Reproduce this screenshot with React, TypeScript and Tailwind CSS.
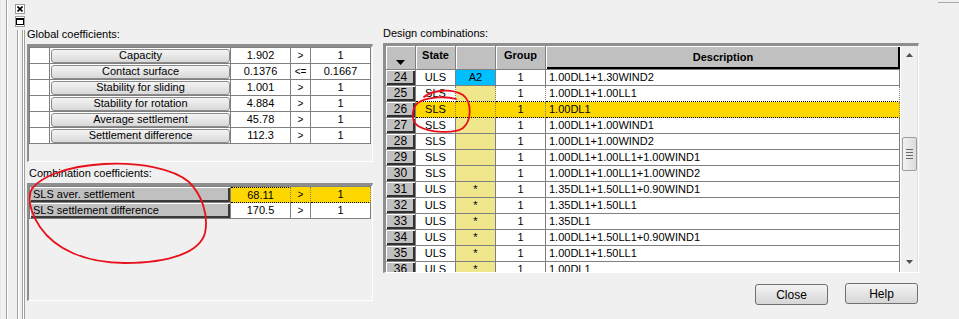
import React from "react";

type Coef = { label: string; value: string; op: string; limit: string };

const globalCoefs: Coef[] = [
  { label: "Capacity", value: "1.902", op: ">", limit: "1" },
  { label: "Contact surface", value: "0.1376", op: "<=", limit: "0.1667" },
  { label: "Stability for sliding", value: "1.001", op: ">", limit: "1" },
  { label: "Stability for rotation", value: "4.884", op: ">", limit: "1" },
  { label: "Average settlement", value: "45.78", op: ">", limit: "1" },
  { label: "Settlement difference", value: "112.3", op: ">", limit: "1" },
];

const comboCoefs: Coef[] = [
  { label: "SLS aver. settlement", value: "68.11", op: ">", limit: "1" },
  { label: "SLS settlement difference", value: "170.5", op: ">", limit: "1" },
];

type Combo = { n: number; state: string; flag: string; desc: string };

const combos: Combo[] = [
  { n: 24, state: "ULS", flag: "A2", desc: "1.00DL1+1.30WIND2" },
  { n: 25, state: "SLS", flag: "", desc: "1.00DL1+1.00LL1" },
  { n: 26, state: "SLS", flag: "", desc: "1.00DL1" },
  { n: 27, state: "SLS", flag: "", desc: "1.00DL1+1.00WIND1" },
  { n: 28, state: "SLS", flag: "", desc: "1.00DL1+1.00WIND2" },
  { n: 29, state: "SLS", flag: "", desc: "1.00DL1+1.00LL1+1.00WIND1" },
  { n: 30, state: "SLS", flag: "", desc: "1.00DL1+1.00LL1+1.00WIND2" },
  { n: 31, state: "ULS", flag: "*", desc: "1.35DL1+1.50LL1+0.90WIND1" },
  { n: 32, state: "ULS", flag: "*", desc: "1.35DL1+1.50LL1" },
  { n: 33, state: "ULS", flag: "*", desc: "1.35DL1" },
  { n: 34, state: "ULS", flag: "*", desc: "1.00DL1+1.50LL1+0.90WIND1" },
  { n: 35, state: "ULS", flag: "*", desc: "1.00DL1+1.50LL1" },
  { n: 36, state: "ULS", flag: "*", desc: "1.00DL1" },
];

const SELECTED = 26;

function LeftStrip() {
  return (
    <div className="flex h-full w-[27px] shrink-0">
      <div className="w-[6px] border-l border-l-[#e6e6e6]" />
      <div className="w-[2px] border-l border-r border-l-[#a0a0a0] border-r-white" />
      <div className="flex w-[19px] flex-col">
        <div className="ml-[7px] mt-[4px] flex h-[10px] w-[10px] items-center justify-center border border-[#9a9a9a] bg-white">
          <svg width="6" height="6" viewBox="0 0 6 6">
            <path d="M0.5 0.5 L5.5 5.5 M5.5 0.5 L0.5 5.5" stroke="#000" strokeWidth="1.6" />
          </svg>
        </div>
        <div className="ml-[7px] mt-[2px] flex h-[11px] w-[10px] items-center justify-center border border-[#9a9a9a] bg-white">
          <svg width="8" height="7" viewBox="0 0 8 7">
            <rect x="0.5" y="1" width="7" height="5.5" fill="none" stroke="#000" strokeWidth="1" />
            <rect x="0" y="0" width="8" height="2" fill="#000" />
          </svg>
        </div>
        <div className="mt-[3px] flex flex-1">
          <div className="ml-[9px] w-[2px] border-l border-r border-l-[#a0a0a0] border-r-white" />
          <div className="ml-[3px] w-[3px] border-l border-r border-[#a0a0a0] bg-white" />
        </div>
      </div>
    </div>
  );
}

function CoefPanel({ rows, combo }: { rows: Coef[]; combo?: boolean }) {
  return (
    <div className="h-[118px] border-l-2 border-t-[3px] border-r border-b border-l-[#8e8e8e] border-t-[#8e8e8e] border-r-white border-b-white">
      <div className="w-[342px] border-l border-t border-[#808080]">
        {rows.map((r, i) => {
          const hot = combo && i === 0;
          const valCls = hot
            ? "bg-[#ffd700] border-b border-dotted border-b-black"
            : "bg-white border-b border-b-[#808080]";
          return (
            <div key={r.label} className="flex h-[16px]">
              {combo ? (
                <div className="w-[201px] border-b border-r border-[#808080] bg-[#c0c0c0] pl-[3px] leading-[15px] shadow-[inset_1px_1px_0_#fff,inset_-2px_-2px_0_#3a3a3a]">
                  {r.label}
                </div>
              ) : (
                <>
                  <div className="w-[20px] border-b border-r border-[#808080] bg-white" />
                  <div className="flex w-[181px] items-center border-b border-r border-[#808080] bg-white pl-[1px]">
                    <div className="flex h-[14px] w-full items-center justify-center rounded-[3px] border border-[#8c8c8c] bg-linear-to-b from-[#f5f5f5] to-[#d8d8d8] leading-none">
                      {r.label}
                    </div>
                  </div>
                </>
              )}
              <div className={`w-[60px] border-r border-r-[#808080] text-center leading-[15px] ${valCls} ${hot ? "border-t border-t-black border-dotted" : ""}`}>
                {r.value}
              </div>
              <div className={`w-[20px] border-r border-r-[#808080] text-center text-[10px] leading-[15px] ${valCls}`}>
                {r.op}
              </div>
              <div className={`w-[60px] border-r border-r-[#808080] text-center leading-[15px] ${valCls}`}>
                {r.limit}
              </div>
            </div>
          );
        })}
      </div>
    </div>
  );
}

function Triangle({ up }: { up?: boolean }) {
  return (
    <svg width="7" height="4" viewBox="0 0 7 4">
      <polygon points={up ? "0,4 7,4 3.5,0" : "0,0 7,0 3.5,4"} fill="#505050" />
    </svg>
  );
}

function Scrollbar() {
  return (
    <div className="flex w-[18px] flex-col bg-[#f0f0f0] shadow-[inset_1px_0_0_#fff,inset_-1px_0_0_#e0e0e0]">
      <div className="flex h-[17px] items-center justify-center">
        <Triangle up />
      </div>
      <div className="flex-1">
        <div className="mx-auto mt-[74px] flex h-[34px] w-[15px] flex-col items-center justify-center gap-[2px] rounded-[2px] border border-[#9e9e9e] bg-linear-to-r from-[#f2f2f2] to-[#dcdcdc]">
          <div className="h-px w-[7px] bg-[#6a6a6a]" />
          <div className="h-px w-[7px] bg-[#6a6a6a]" />
          <div className="h-px w-[7px] bg-[#6a6a6a]" />
          <div className="h-px w-[7px] bg-[#6a6a6a]" />
        </div>
      </div>
      <div className="flex h-[14px] items-start justify-center pt-[2px]">
        <Triangle />
      </div>
    </div>
  );
}

function ComboTable() {
  const head = "h-full border-r border-[#808080] bg-[#c0c0c0] shadow-[inset_1px_1px_0_#fff]";
  return (
    <div className="flex h-[230px] overflow-hidden border-l-[3px] border-t-[3px] border-r border-b border-l-[#8e8e8e] border-t-[#8e8e8e] border-r-white border-b-white">
      <div className="flex w-[514px] flex-col">
        <div className="flex h-[24px] shrink-0 border-b border-[#808080] font-bold">
          <div className={`flex w-[30px] items-end justify-center pb-[4px] ${head}`}>
            <svg width="9" height="5" viewBox="0 0 9 5">
              <polygon points="0,0 9,0 4.5,5" fill="#000" />
            </svg>
          </div>
          <div className={`w-[40px] pt-[1px] text-center ${head}`}>State</div>
          <div className={`w-[40px] ${head}`} />
          <div className={`w-[50px] pt-[1px] text-center ${head}`}>Group</div>
          <div className="flex h-full w-[354px] items-center justify-center bg-[#c0c0c0] shadow-[inset_1px_1px_0_#fff,inset_-2px_-2px_0_#000]">
            Description
          </div>
        </div>
        {combos.map((c) => {
          const sel = c.n === SELECTED;
          const beforeSel = c.n === SELECTED - 1;
          const line = sel || beforeSel ? "border-b border-dotted border-b-black" : "border-b border-b-[#808080]";
          const bg = sel ? "bg-[#ffd700]" : "bg-white";
          const flagBg = sel ? "bg-[#ffd700]" : c.flag === "A2" ? "bg-[#00bfff]" : "bg-[#f0e68c]";
          return (
            <div key={c.n} className="flex h-[16px] shrink-0 leading-[15px]">
              <div className="w-[30px] border-b border-r border-[#808080] bg-[#c0c0c0] text-center text-[12px] shadow-[inset_1px_1px_0_#fff,inset_-2px_-2px_0_#303030]">
                {c.n}
              </div>
              <div className={`w-[40px] border-r border-r-[#808080] text-center ${line} ${bg}`}>{c.state}</div>
              <div className={`w-[40px] border-r border-r-[#808080] text-center ${line} ${flagBg}`}>{c.flag}</div>
              <div className={`w-[50px] border-r border-r-[#808080] text-center ${line} ${bg}`}>1</div>
              <div className={`w-[354px] border-r border-r-[#808080] pl-[3px] ${line} ${bg}`}>{c.desc}</div>
            </div>
          );
        })}
      </div>
      <Scrollbar />
    </div>
  );
}

function DlgButton({ children, className = "" }: { children: React.ReactNode; className?: string }) {
  return (
    <div
      className={`flex h-[21px] w-[73px] items-center justify-center rounded-[3px] border border-[#707070] bg-linear-to-b from-[#f4f4f4] to-[#d6d6d6] text-[12px] ${className}`}
    >
      {children}
    </div>
  );
}

function Annotations() {
  return (
    <svg className="pointer-events-none absolute left-0 top-0" width="959" height="319" viewBox="0 0 959 319">
      <path
        d="M424 97 C432 90 452 88 463 95 C472 102 472 120 463 128 C455 134 430 133 418 126 C410 120 411 106 421 101 C430 97 446 96 456 99"
        fill="none"
        stroke="#e8101a"
        strokeWidth="1.8"
        strokeLinecap="round"
      />
      <path
        d="M30 193 C36 177 68 166 104 164 C140 162 174 169 189 182 C201 194 209 214 205 233 C200 252 170 263 125 263 C85 263 55 249 40 227 C30 212 27 199 32 188"
        fill="none"
        stroke="#e8101a"
        strokeWidth="1.8"
        strokeLinecap="round"
      />
    </svg>
  );
}

export default function App() {
  return (
    <div className="relative flex h-[319px] w-[959px] overflow-hidden bg-[#f0f0f0] font-['Liberation_Sans',Arial,sans-serif] text-[11px] text-black">
      <LeftStrip />
      <div className="flex w-[346px] shrink-0 flex-col pt-[28px]">
        <div className="h-[13px] leading-[13px]">Global coefficients:</div>
        <div className="mt-[3px]">
          <CoefPanel rows={globalCoefs} />
        </div>
        <div className="ml-[2px] mt-[5px] h-[13px] leading-[13px]">Combination coefficients:</div>
        <div className="mt-[3px]">
          <CoefPanel rows={comboCoefs} combo />
        </div>
      </div>
      <div className="ml-[10px] flex w-[536px] shrink-0 flex-col pt-[27px]">
        <div className="h-[13px] leading-[13px]">Design combinations:</div>
        <div className="mt-[3px]">
          <ComboTable />
        </div>
        <div className="mt-[10px] flex justify-end gap-[17px]">
          <DlgButton className="mt-[1px]">Close</DlgButton>
          <DlgButton className="mr-[1px]">Help</DlgButton>
        </div>
      </div>
      <div className="flex-1 pt-[2px]">
        <div className="ml-[19px] h-px bg-[#a8a8a8]" />
      </div>
      <Annotations />
    </div>
  );
}
